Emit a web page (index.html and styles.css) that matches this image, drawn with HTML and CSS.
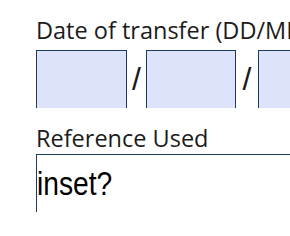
FILE: index.html
```html
<!DOCTYPE html>
<html>
<head>
<meta charset="utf-8">
<link rel="stylesheet" href="styles.css">
</head>
<body>
<div class="form">
  <div class="label label-date">Date of transfer (DD/MM/YYYY)</div>
  <div class="date-row">
    <div class="box box-1"></div>
    <span class="sep sep-1">/</span>
    <div class="box box-2"></div>
    <span class="sep sep-2">/</span>
    <div class="box box-3"></div>
  </div>
  <div class="label label-ref">Reference Used</div>
  <div class="ref-box"><span class="ref-text">inset?</span></div>
</div>
</body>
</html>
```

FILE: styles.css
```css
html, body {
  margin: 0;
  padding: 0;
  background: #ffffff;
}
.form {
  width: 290px;
  height: 236px;
  overflow: hidden;
  padding-left: 36px;
  box-sizing: border-box;
  font-family: "Open Sans", sans-serif;
  color: #1b1b1b;
}
.label {
  font-size: 23.5px;
  line-height: 30px;
  white-space: nowrap;
}
.label-date {
  padding-top: 15px;
  margin-bottom: 5px;
}
.date-row {
  display: flex;
  align-items: flex-start;
  width: 400px;
}
.box {
  flex: 0 0 auto;
  height: 58px;
  box-sizing: border-box;
  background: #dce3fb;
  border: 1px solid #1e3a5c;
  border-bottom: none;
}
.box-1 {
  width: 91px;
}
.box-2 {
  width: 90px;
}
.box-3 {
  width: 90px;
}
.sep {
  flex: 0 0 auto;
  text-align: center;
  font-family: "Liberation Sans", Arial, sans-serif;
  font-size: 32px;
  line-height: 32px;
  margin-top: 13px;
}
.sep-1 {
  width: 19px;
}
.sep-2 {
  width: 22px;
}
.label-ref {
  margin-top: 15px;
  margin-bottom: 1px;
}
.ref-box {
  height: 58px;
  width: 400px;
  box-sizing: border-box;
  border-top: 1px solid #1e3a5c;
  border-left: 1px solid #1e3a5c;
  font-family: "Liberation Sans", Arial, sans-serif;
  font-size: 33px;
  line-height: 38px;
  color: #000;
  padding-top: 10px;
}
.ref-text {
  display: inline-block;
  transform: scaleX(0.855);
  transform-origin: left center;
}
```
